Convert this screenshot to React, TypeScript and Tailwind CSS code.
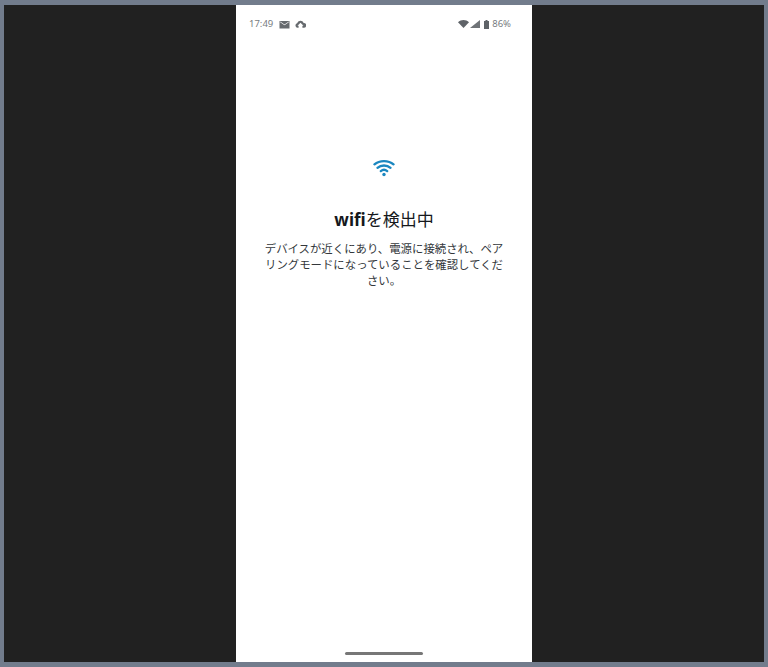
const fontStack = { fontFamily: '"Noto Sans", "Noto Sans CJK JP", sans-serif' };

const StatusBar = () => (
  <div className="flex h-[37px] items-center justify-between pl-[13px] pr-[21px] pt-[1px] text-[9.500px] text-[#777b80]">
    <div className="flex items-center">
      <span>17:49</span>
      <svg className="ml-[6px]" width="11" height="9" viewBox="0 0 11 9" fill="#666a6e">
        <path d="M0.500 1h10v7.500h-10z M1.200 1.400L5.500 4.400 9.800 1.400 9.800 2.300 5.500 5.300 1.200 2.300z" fillRule="evenodd" />
      </svg>
      <svg className="ml-[5px]" width="11" height="9" viewBox="0 0 11 9" fill="#666a6e">
        <path d="M2.600 7.800a2.300 2.300 0 0 1-.5-4.500 3.500 3.500 0 0 1 6.600-.3 2.400 2.400 0 0 1 .1 4.800H7.400V5.800h1.100L5.500 2.800l-3 3h1.100v2z" />
      </svg>
    </div>
    <div className="flex items-center">
      <svg width="11" height="8" viewBox="0 0 11 8" fill="#5f6368">
        <path d="M0 2.200C3-.7 8-.7 11 2.200L5.500 8z" />
      </svg>
      <svg className="ml-[1px]" width="10" height="8" viewBox="0 0 10 8" fill="#6f7377">
        <path d="M10 0v8H0z" />
      </svg>
      <svg className="ml-[4px]" width="5" height="9" viewBox="0 0 5 9" fill="#5f6368">
        <path d="M1.500 0h2v1H5v8H0V1h1.500z" />
      </svg>
      <span className="ml-[3px]">86%</span>
    </div>
  </div>
);

const WifiIcon = () => (
  <svg width="22" height="18" viewBox="0 0 22 18" fill="none" stroke="#1b87c0" strokeWidth="2.400" strokeLinecap="round">
    <path d="M1.500 5.300C6.500 1 15.500 1 20.500 5.300" />
    <path d="M4.500 8.800C8 5.800 14 5.800 17.500 8.800" />
    <path d="M7.800 12.100c1.800-1.400 4.600-1.400 6.400 0" />
    <circle cx="11" cy="15.500" r="1.700" fill="#1b87c0" stroke="none" />
  </svg>
);

export default function App() {
  return (
    <div className="flex h-[667px] w-[768px] justify-center border-x-[4px] border-y-[5px] border-[#727c8c] bg-[#212121]" style={fontStack}>
      <div className="flex w-[296px] flex-col bg-white">
        <StatusBar />
        <div className="flex flex-col items-center">
          <div className="mt-[117px]">
            <WifiIcon />
          </div>
          <h1 className="mt-[31px] text-[17px] leading-[24px] text-[#15181c]">
            <span className="font-bold">wifi</span>を検出中
          </h1>
          <p className="mt-[9px] w-[244px] text-center text-[11.400px] leading-[16px] text-[#33373b]">
            デバイスが近くにあり、電源に接続され、ペアリングモードになっていることを確認してください。
          </p>
        </div>
        <div className="mt-auto mb-[7px] flex justify-center">
          <div className="h-[3px] w-[78px] rounded-full bg-[#777777]" />
        </div>
      </div>
    </div>
  );
}
